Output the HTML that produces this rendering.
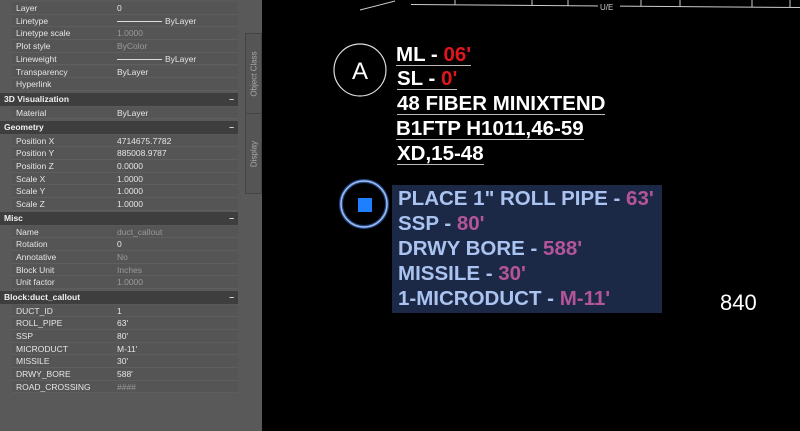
<!DOCTYPE html>
<html><head><meta charset="utf-8"><style>
*{margin:0;padding:0;box-sizing:border-box}
body{width:800px;height:431px;overflow:hidden;background:#000;font-family:"Liberation Sans",sans-serif;position:relative}
#panel{position:absolute;left:0;top:0;width:262px;height:431px;background:#595959}
.r{position:absolute;left:12px;width:226px;height:12.7px;background:#555;border-bottom:1px solid #5e5e5e;font-size:8.5px;color:#e6e6e6;line-height:12px}
.r span{position:absolute;left:4px}
.r b{position:absolute;left:105px;font-weight:normal}
.r b.g{color:#9a9a9a}
.h{position:absolute;left:0;width:238px;height:13px;background:#3e3e3e;font-size:8.5px;font-weight:bold;color:#f0f0f0;line-height:13px;padding-left:4px}
.h i{position:absolute;right:4px;font-style:normal}
.ln{display:inline-block;width:45px;height:1px;background:#ddd;vertical-align:middle;margin-right:3px}
.tab{position:absolute;left:245px;width:17px;background:#555;border:1px solid #444;color:#aaa;font-size:8px}
.tab div{position:absolute;left:50%;top:50%;transform:translate(-50%,-50%) rotate(-90deg);white-space:nowrap}
.w{position:absolute;color:#fff;font-weight:bold;font-size:20.5px;border-bottom:1.5px solid #bbb;line-height:21px;white-space:nowrap}
.red{color:#e0161e}
#box{position:absolute;left:392px;top:185px;width:270px;height:128px;background:#1c2946}
.b{position:absolute;left:6px;color:#aac3f0;font-weight:bold;font-size:20.5px;line-height:22px;white-space:nowrap}
.p{color:#b4559a}
</style></head><body>
<div id="panel">
<div class="r" style="top:2px"><span>Layer</span><b>0</b></div>
<div class="r" style="top:14.7px"><span>Linetype</span><b><i class="ln"></i>ByLayer</b></div>
<div class="r" style="top:27.4px"><span>Linetype scale</span><b class="g">1.0000</b></div>
<div class="r" style="top:40.1px"><span>Plot style</span><b class="g">ByColor</b></div>
<div class="r" style="top:52.8px"><span>Lineweight</span><b><i class="ln"></i>ByLayer</b></div>
<div class="r" style="top:65.5px"><span>Transparency</span><b>ByLayer</b></div>
<div class="r" style="top:78.2px"><span>Hyperlink</span></div>
<div class="h" style="top:93px">3D Visualization<i>–</i></div>
<div class="r" style="top:106.5px"><span>Material</span><b>ByLayer</b></div>
<div class="h" style="top:121px">Geometry<i>–</i></div>
<div class="r" style="top:134.5px"><span>Position X</span><b>4714675.7782</b></div>
<div class="r" style="top:147.2px"><span>Position Y</span><b>885008.9787</b></div>
<div class="r" style="top:159.9px"><span>Position Z</span><b>0.0000</b></div>
<div class="r" style="top:172.6px"><span>Scale X</span><b>1.0000</b></div>
<div class="r" style="top:185.3px"><span>Scale Y</span><b>1.0000</b></div>
<div class="r" style="top:198px"><span>Scale Z</span><b>1.0000</b></div>
<div class="h" style="top:212px">Misc<i>–</i></div>
<div class="r" style="top:225.5px"><span>Name</span><b class="g">duct_callout</b></div>
<div class="r" style="top:238.2px"><span>Rotation</span><b>0</b></div>
<div class="r" style="top:250.9px"><span>Annotative</span><b class="g">No</b></div>
<div class="r" style="top:263.6px"><span>Block Unit</span><b class="g">Inches</b></div>
<div class="r" style="top:276.3px"><span>Unit factor</span><b class="g">1.0000</b></div>
<div class="h" style="top:291px">Block:duct_callout<i>–</i></div>
<div class="r" style="top:304.5px"><span>DUCT_ID</span><b>1</b></div>
<div class="r" style="top:317.2px"><span>ROLL_PIPE</span><b>63'</b></div>
<div class="r" style="top:329.9px"><span>SSP</span><b>80'</b></div>
<div class="r" style="top:342.6px"><span>MICRODUCT</span><b>M-11'</b></div>
<div class="r" style="top:355.3px"><span>MISSILE</span><b>30'</b></div>
<div class="r" style="top:368px"><span>DRWY_BORE</span><b>588'</b></div>
<div class="r" style="top:380.7px"><span>ROAD_CROSSING</span><b class="g">####</b></div>
</div>
<div class="tab" style="top:33px;height:81px"><div>Object Class</div></div>
<div class="tab" style="top:113px;height:81px"><div>Display</div></div>
<svg style="position:absolute;left:0;top:0" width="800" height="431">
<line x1="360" y1="10" x2="395" y2="1" stroke="#ccc" stroke-width="1"/>
<line x1="411" y1="4.5" x2="800" y2="7.5" stroke="#ccc" stroke-width="1"/>
<g stroke="#ccc"><line x1="455" y1="0" x2="455" y2="5"/><line x1="532" y1="0" x2="532" y2="5.5"/><line x1="568" y1="0" x2="568" y2="6"/><line x1="641" y1="0" x2="641" y2="6.5"/><line x1="680" y1="0" x2="680" y2="7"/><line x1="752" y1="0" x2="752" y2="7.5"/><line x1="790" y1="0" x2="790" y2="7.5"/></g>
<rect x="598" y="2" width="22" height="8" fill="#000"/>
<text x="600" y="10" fill="#ccc" font-size="8" font-family="Liberation Sans">U/E</text>
<circle cx="360" cy="70" r="26" fill="none" stroke="#ddd" stroke-width="1.2"/>
<text x="360" y="79" fill="#fff" font-size="24" text-anchor="middle" font-family="Liberation Sans">A</text>
<circle cx="364" cy="204" r="23" fill="none" stroke="#3d6fd0" stroke-width="4" opacity="0.6"/>
<circle cx="364" cy="204" r="23" fill="none" stroke="#9cc0f5" stroke-width="1.5"/>
<rect x="358" y="198" width="14" height="14" fill="#1e80ff"/>
<text x="720" y="310" fill="#fff" font-size="22" font-family="Liberation Sans">840</text>
</svg>
<div class="w" style="left:396px;top:44px">ML - <span class="red">06'</span></div>
<div class="w" style="left:397px;top:68px">SL - <span class="red">0'</span></div>
<div class="w" style="left:397px;top:93px">48 FIBER MINIXTEND</div>
<div class="w" style="left:396px;top:118px">B1FTP H1011,46-59</div>
<div class="w" style="left:397px;top:143px">XD,15-48</div>
<div id="box">
<div class="b" style="top:3px">PLACE 1" ROLL PIPE - <span class="p">63'</span></div>
<div class="b" style="top:28px">SSP - <span class="p">80'</span></div>
<div class="b" style="top:53px">DRWY BORE - <span class="p">588'</span></div>
<div class="b" style="top:78px">MISSILE - <span class="p">30'</span></div>
<div class="b" style="top:103px">1-MICRODUCT - <span class="p">M-11'</span></div>
</div>
</body></html>
